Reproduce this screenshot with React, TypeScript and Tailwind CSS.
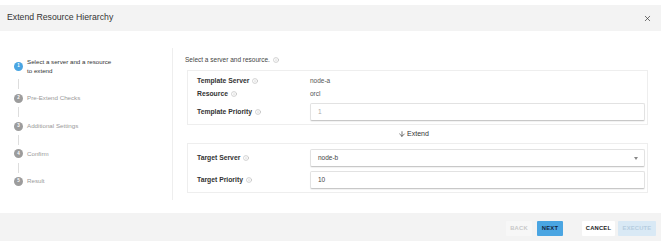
import { ArrowDown, Info, X } from "lucide-react";

const steps = [
  { n: 1, label: ["Select a server and a resource", "to extend"], active: true },
  { n: 2, label: ["Pre-Extend Checks"], active: false },
  { n: 3, label: ["Additional Settings"], active: false },
  { n: 4, label: ["Confirm"], active: false },
  { n: 5, label: ["Result"], active: false },
];

function Hint() {
  return <Info size={6} strokeWidth={1.6} className="text-[#9a9a9a] ml-[3px] shrink-0" />;
}

function Label({ text }: { text: string }) {
  return (
    <div className="w-[113px] flex items-center font-bold text-[6.8px] text-[#333]">
      {text}
      <Hint />
    </div>
  );
}

function Field({ value, muted, caret }: { value: string; muted?: boolean; caret?: boolean }) {
  return (
    <div className="flex-1 h-[18px] flex items-center justify-between px-[7px] bg-white border border-[#e2e2e2] border-b-[#c8c8c8] rounded-[2px] shadow-[0_1px_1px_rgba(0,0,0,0.06)]">
      <span className={muted ? "text-[6.5px] text-[#aaa]" : "text-[6.5px] text-[#444]"}>{value}</span>
      {caret && (
        <span className="w-0 h-0 border-l-[2.5px] border-r-[2.5px] border-t-[3px] border-l-transparent border-r-transparent border-t-[#888] mr-[-1px]" />
      )}
    </div>
  );
}

export default function App() {
  return (
    <div
      className="w-[661px] h-[241px] bg-white flex flex-col overflow-hidden"
      style={{ fontFamily: '"Liberation Sans", Arial, sans-serif' }}
    >
      {/* Header */}
      <div className="pt-[5px]">
        <div className="h-[26px] bg-[#f3f3f3] flex items-center justify-between pl-[7px] pr-[9px]">
          <span className="text-[8.7px] text-[#333]">Extend Resource Hierarchy</span>
          <X size={9} strokeWidth={1.8} className="text-[#333]" />
        </div>
      </div>

      {/* Body */}
      <div className="flex-1 flex pt-[17px] pb-[13px]">
        {/* Stepper */}
        <div className="w-[173px] border-r border-[#eeeeee] pl-[14px] pt-[10px]">
          {steps.map((s, i) => (
            <div key={s.n}>
              {i > 0 && (
                <div className="h-[18.8px] flex items-center">
                  <div className="w-px h-[10px] bg-[#dddddd] ml-[4px]" />
                </div>
              )}
              <div className={`flex items-center gap-[4px] ${i === 0 ? "h-[17px]" : "h-[9px]"}`}>
                <div
                  className={`w-[9px] h-[9px] rounded-full flex items-center justify-center text-white text-[4.5px] font-bold shrink-0 ${
                    s.active ? "bg-[#4aa5e2]" : "bg-[#9c9c9c]"
                  }`}
                >
                  {s.n}
                </div>
                <div className={`text-[6.2px] leading-[8.5px] ${s.active ? "text-[#333]" : "text-[#999]"}`}>
                  {s.label.map((l) => (
                    <div key={l}>{l}</div>
                  ))}
                </div>
              </div>
            </div>
          ))}
        </div>

        {/* Content */}
        <div className="flex-1 pl-[12px] pr-[13px] pt-[8px]">
          <div className="h-[8px] flex items-center text-[6.5px] text-[#444]">
            Select a server and resource.
            <Hint />
          </div>

          <div className="mt-[6px] ml-[2px] border border-[#eeeeee] pl-[9px] pr-[2px] pt-[5px] pb-[3px]">
            <div className="h-[10px] flex items-center">
              <Label text="Template Server" />
              <span className="text-[6.5px] text-[#555]">node-a</span>
            </div>
            <div className="h-[10px] mt-[3px] flex items-center">
              <Label text="Resource" />
              <span className="text-[6.5px] text-[#555]">orcl</span>
            </div>
            <div className="h-[18px] mt-[4px] flex items-center">
              <Label text="Template Priority" />
              <Field value="1" muted />
            </div>
          </div>

          <div className="h-[18px] flex items-center justify-center pr-[6px] text-[7px] text-[#333]">
            <ArrowDown size={8} strokeWidth={2} className="mr-[1px]" />
            Extend
          </div>

          <div className="ml-[2px] border border-[#eeeeee] pl-[9px] pr-[2px] pt-[5px] pb-[3px]">
            <div className="h-[18px] flex items-center">
              <Label text="Target Server" />
              <Field value="node-b" caret />
            </div>
            <div className="h-[18px] mt-[4px] flex items-center">
              <Label text="Target Priority" />
              <Field value="10" />
            </div>
          </div>
        </div>
      </div>

      {/* Footer */}
      <div className="h-[28px] bg-[#f3f3f3] flex items-center justify-end pr-[5px] pt-[3px] text-[5.8px] font-bold tracking-[0.2px]">
        <div className="w-[26px] h-[15px] flex items-center justify-center bg-[#f7f7f7] text-[#c8c8c8] rounded-[1px]">
          BACK
        </div>
        <div className="w-[26px] h-[15px] ml-[5px] flex items-center justify-center bg-[#4aa5e2] text-[#14263f] rounded-[1px]">
          NEXT
        </div>
        <div className="w-[33px] h-[15px] ml-[19px] flex items-center justify-center bg-white text-[#222] rounded-[1px]">
          CANCEL
        </div>
        <div className="w-[38px] h-[15px] ml-[3px] flex items-center justify-center bg-[#d9e9f5] text-[#b6cde0] rounded-[1px]">
          EXECUTE
        </div>
      </div>
    </div>
  );
}
